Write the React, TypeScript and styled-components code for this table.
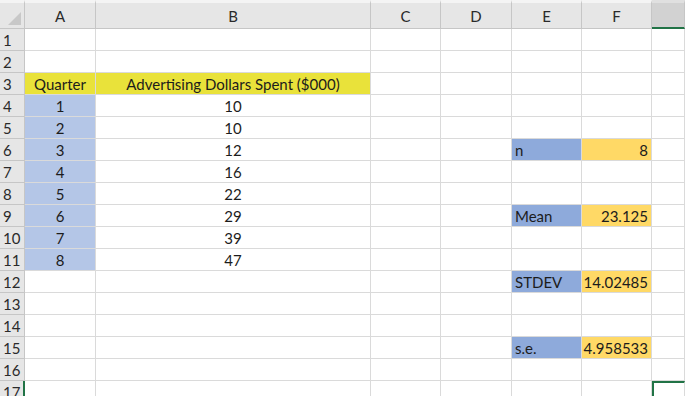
import React from "react";
import styled, { createGlobalStyle, css } from "styled-components";

const Global = createGlobalStyle`
  html, body { margin: 0; padding: 0; background: #ffffff; }
  body { font-family: Lato, "Liberation Sans", sans-serif; }
`;

const COLS = [25, 71, 275, 70, 71, 70, 70, 33];
const Sheet = styled.div`
  display: grid;
  grid-template-columns: ${COLS.map((c) => c + "px").join(" ")};
  grid-template-rows: 29px repeat(17, 22px);
  width: 685px;
  height: 396px;
  overflow: hidden;
  font-size: 15px;
  color: #1c1c1c;
`;

type Fill = "none" | "yellow" | "lightblue" | "blue" | "gold";
const fills: Record<Fill, string> = {
  none: "#ffffff",
  yellow: "#e9e23a",
  lightblue: "#b4c6e7",
  blue: "#8eaadb",
  gold: "#ffd966",
};

const Corner = styled.div`
  box-sizing: border-box;
  background: #e6e6e6;
  border-right: 1px solid #c6c6c6;
  border-bottom: 1px solid #c6c6c6;
  border-top: 3px solid #f4f4f4;
  position: relative;
  &::after {
    content: "";
    position: absolute;
    right: 3px;
    bottom: 3px;
    width: 0;
    height: 0;
    border-left: 13px solid transparent;
    border-bottom: 13px solid #c8c8c8;
  }
`;

const ColHead = styled.div<{ $sel?: boolean }>`
  box-sizing: border-box;
  background: ${(p) => (p.$sel ? "#d2d2d2" : "#e6e6e6")};
  border-top: 3px solid ${(p) => (p.$sel ? "#e0e0e0" : "#f4f4f4")};
  border-right: 1px solid #c6c6c6;
  border-bottom: ${(p) => (p.$sel ? "2px solid #217346" : "1px solid #c6c6c6")};
  display: flex;
  align-items: center;
  justify-content: center;
  color: #2a2a2a;
  padding-top: 1px;
`;

const RowHead = styled.div<{ $sel?: boolean }>`
  box-sizing: border-box;
  background: #e6e6e6;
  border-right: ${(p) => (p.$sel ? "2px solid #217346" : "1px solid #c6c6c6")};
  border-bottom: 1px solid #c6c6c6;
  display: flex;
  align-items: center;
  padding-left: 3px;
  color: #2a2a2a;
`;

const Cell = styled.div<{ $fill?: Fill; $align?: "left" | "center" | "right"; $sel?: boolean }>`
  box-sizing: border-box;
  background: ${(p) => fills[p.$fill || "none"]};
  border-right: 1px solid #dadada;
  border-bottom: 1px solid #dadada;
  display: flex;
  align-items: center;
  white-space: nowrap;
  overflow: visible;
  padding: 0 3px;
  justify-content: ${(p) =>
    p.$align === "center" ? "center" : p.$align === "right" ? "flex-end" : "flex-start"};
  ${(p) =>
    p.$sel &&
    css`
      border-top: 2px solid #217346;
      border-left: 2px solid #217346;
    `}
`;

type CellDef = { v?: string; fill?: Fill; align?: "left" | "center" | "right" };

const quarters = [10, 10, 12, 16, 22, 29, 39, 47];
const stats: Record<number, [string, string]> = {
  6: ["n", "8"],
  9: ["Mean", "23.125"],
  12: ["STDEV", "14.02485"],
  15: ["s.e.", "4.958533"],
};

function rowCells(r: number): CellDef[] {
  const cells: CellDef[] = Array.from({ length: 7 }, () => ({}));
  if (r === 3) {
    cells[0] = { v: "Quarter", fill: "yellow", align: "center" };
    cells[1] = { v: "Advertising Dollars Spent ($000)", fill: "yellow", align: "center" };
  }
  if (r >= 4 && r <= 11) {
    cells[0] = { v: String(r - 3), fill: "lightblue", align: "center" };
    cells[1] = { v: String(quarters[r - 4]), align: "center" };
  }
  if (stats[r]) {
    cells[4] = { v: stats[r][0], fill: "blue", align: "left" };
    cells[5] = { v: stats[r][1], fill: "gold", align: "right" };
  }
  return cells;
}

const letters = ["A", "B", "C", "D", "E", "F", ""];

export default function App() {
  const rows = Array.from({ length: 17 }, (_, i) => i + 1);
  return (
    <>
      <Global />
      <Sheet>
        <Corner />
        {letters.map((l, i) => (
          <ColHead key={i} $sel={i === 6}>
            {l}
          </ColHead>
        ))}
        {rows.map((r) => (
          <React.Fragment key={r}>
            <RowHead $sel={r === 17}>{r}</RowHead>
            {rowCells(r).map((c, i) => (
              <Cell key={i} $fill={c.fill} $align={c.align} $sel={r === 17 && i === 6}>
                {c.v}
              </Cell>
            ))}
          </React.Fragment>
        ))}
      </Sheet>
    </>
  );
}
